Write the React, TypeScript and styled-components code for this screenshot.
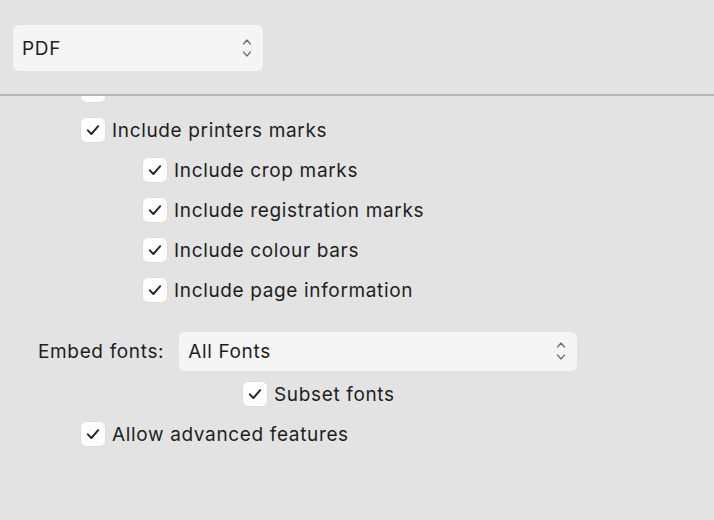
import styled, { createGlobalStyle } from 'styled-components';

const Global = createGlobalStyle`
  html, body {
    margin: 0;
    padding: 0;
    background: #e3e3e3;
  }
  body {
    font-family: Inter, "Noto Sans", "Liberation Sans", sans-serif;
    color: #1e1e1e;
    -webkit-font-smoothing: antialiased;
  }
`;

const Panel = styled.div`
  width: 714px;
  height: 520px;
  background: #e3e3e3;
  display: flex;
  flex-direction: column;
  overflow: hidden;
`;

const Header = styled.div`
  height: 96px;
  box-sizing: border-box;
  padding: 25px 0 0 13px;
  border-bottom: 2px solid #b6b6b6;
`;

const Select = styled.div<{ $width: number; $height: number }>`
  width: ${(p) => p.$width}px;
  height: ${(p) => p.$height}px;
  box-sizing: border-box;
  background: #f5f5f5;
  border-radius: 6px;
  display: flex;
  align-items: center;
  justify-content: space-between;
  padding: 0 11px 0 9px;
  font-size: 19px;
  letter-spacing: 0.65px;
`;

const Scroll = styled.div`
  flex: 1;
  overflow: hidden;
`;

const Content = styled.div`
  margin-top: -26px;
  display: flex;
  flex-direction: column;
`;

const Row = styled.div<{ $indent: number; $gap?: number }>`
  height: 40px;
  display: flex;
  align-items: center;
  padding-left: ${(p) => p.$indent}px;
  margin-top: ${(p) => p.$gap ?? 0}px;
  gap: 7px;
  font-size: 19px;
  letter-spacing: 0.65px;
`;

const Box = styled.span`
  width: 24px;
  height: 24px;
  box-sizing: border-box;
  border-radius: 5px;
  background: #ffffff;
  box-shadow: 0 0 0 0.5px rgba(0, 0, 0, 0.06);
  display: flex;
  align-items: center;
  justify-content: center;
  flex: none;
`;

const FieldRow = styled.div`
  height: 40px;
  display: flex;
  align-items: center;
  padding-left: 38px;
  margin-top: 21px;
  gap: 15px;
  font-size: 19px;
  letter-spacing: 0.65px;
`;

const Chevrons = () => (
  <svg width="10" height="22" viewBox="0 0 10 22">
    <path d="M1.5 7 L5 3 L8.5 7" fill="none" stroke="#6b6b6b" strokeWidth="1.2" strokeLinecap="round" strokeLinejoin="round" />
    <path d="M1.5 15 L5 19 L8.5 15" fill="none" stroke="#6b6b6b" strokeWidth="1.2" strokeLinecap="round" strokeLinejoin="round" />
  </svg>
);

const Check = ({ label, indent, gap }: { label?: string; indent: number; gap?: number }) => (
  <Row $indent={indent} $gap={gap}>
    <Box>
      <svg width="14" height="12" viewBox="0 0 14 12">
        <path d="M1.8 6.4 L5.4 10 L12.2 2.2" fill="none" stroke="#262626" strokeWidth="2" strokeLinecap="round" strokeLinejoin="round" />
      </svg>
    </Box>
    {label && <span>{label}</span>}
  </Row>
);

export default function App() {
  return (
    <>
      <Global />
      <Panel>
        <Header>
          <Select $width={250} $height={46}>
            <span>PDF</span>
            <Chevrons />
          </Select>
        </Header>
        <Scroll>
          <Content>
            <Check indent={81} />
            <Check indent={81} label="Include printers marks" />
            <Check indent={143} label="Include crop marks" />
            <Check indent={143} label="Include registration marks" />
            <Check indent={143} label="Include colour bars" />
            <Check indent={143} label="Include page information" />
            <FieldRow>
              <span>Embed fonts:</span>
              <Select $width={398} $height={39}>
                <span>All Fonts</span>
                <Chevrons />
              </Select>
            </FieldRow>
            <Check indent={243} gap={3} label="Subset fonts" />
            <Check indent={81} label="Allow advanced features" />
          </Content>
        </Scroll>
      </Panel>
    </>
  );
}
